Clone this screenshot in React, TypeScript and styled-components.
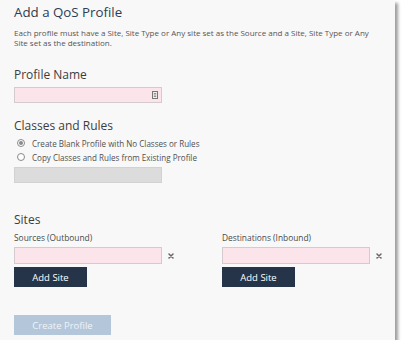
import { FC } from "react";
import styled, { createGlobalStyle, css } from "styled-components";

const GlobalStyle = createGlobalStyle`
  html, body {
    margin: 0;
    padding: 0;
    background: #ffffff;
  }
  *, *::before, *::after {
    box-sizing: border-box;
  }
  body {
    font-family: "Open Sans", "Liberation Sans", sans-serif;
    color: #4a4a4a;
  }
`;

const CardIcon: FC = () => (
  <svg width="6" height="8" viewBox="0 0 6 8">
    <rect x="0.5" y="0.5" width="5" height="7" fill="#eee" stroke="#777" />
    <line x1="1.8" y1="2.5" x2="4.2" y2="2.5" stroke="#777" strokeWidth="0.8" />
    <line x1="1.8" y1="4" x2="4.2" y2="4" stroke="#777" strokeWidth="0.8" />
    <line x1="1.8" y1="5.5" x2="4.2" y2="5.5" stroke="#777" strokeWidth="0.8" />
  </svg>
);

const RemoveIcon: FC = () => (
  <svg width="6" height="6" viewBox="0 0 6 6">
    <path d="M1 1 L5 5 M5 1 L1 5" stroke="#666" strokeWidth="1.5" strokeLinecap="round" />
  </svg>
);

interface SiteColumnProps {
  label: string;
}

const SiteColumn: FC<SiteColumnProps> = ({ label }) => (
  <Column>
    <SmallLabel>{label}</SmallLabel>
    <InputRow>
      <Field />
      <Remove>
        <RemoveIcon />
      </Remove>
    </InputRow>
    <DarkButton>Add Site</DarkButton>
  </Column>
);

const App: FC = () => {
  return (
    <>
      <GlobalStyle />
      <Panel>
        <Title>Add a QoS Profile</Title>
        <Desc>
          Each profile must have a Site, Site Type or Any site set as the Source and a Site, Site Type or Any
          Site set as the destination.
        </Desc>

        <Heading $gap={19}>Profile Name</Heading>
        <Field $gap={5}>
          <FieldIcon>
            <CardIcon />
          </FieldIcon>
        </Field>

        <Heading $gap={15}>Classes and Rules</Heading>
        <RadioList>
          <RadioRow>
            <Radio $checked />
            Create Blank Profile with No Classes or Rules
          </RadioRow>
          <RadioRow>
            <Radio />
            Copy Classes and Rules from Existing Profile
          </RadioRow>
        </RadioList>
        <DisabledSelect />

        <Heading $gap={29}>Sites</Heading>
        <Columns>
          <SiteColumn label="Sources (Outbound)" />
          <SiteColumn label="Destinations (Inbound)" />
        </Columns>

        <SubmitButton disabled>Create Profile</SubmitButton>
      </Panel>
    </>
  );
};

const Panel = styled.div`
  width: 395px;
  height: 340px;
  padding: 3px 14px 5px 14px;
  background: #f8f8f8;
  box-shadow: 3px 3px 3px rgba(0, 0, 0, 0.38);
  display: flex;
  flex-direction: column;
`;

const Title = styled.h1`
  margin: 0;
  font-size: 13.3px;
  line-height: 18px;
  font-weight: 400;
  color: #2e3d50;
`;

const Desc = styled.p`
  margin: 7.3px 0 0 0;
  font-size: 8px;
  line-height: 9.8px;
  color: #555;
`;

const Heading = styled.h2<{ $gap: number }>`
  margin: ${({ $gap }) => $gap}px 0 0 0;
  font-size: 12px;
  line-height: 15px;
  font-weight: 400;
  color: #3d3d3d;
`;

const Field = styled.div<{ $gap?: number }>`
  ${({ $gap }) => css`
    margin-top: ${$gap ?? 0}px;
  `}
  position: relative;
  width: 148px;
  height: 16px;
  background: #fbe4ea;
  border: 1px solid #d3cbcd;
`;

const FieldIcon = styled.span`
  position: absolute;
  right: 3px;
  top: 3px;
  display: flex;
`;

const RadioList = styled.div`
  margin-top: 3.5px;
  display: flex;
  flex-direction: column;
`;

const RadioRow = styled.label`
  display: flex;
  align-items: center;
  gap: 7px;
  padding-left: 3px;
  height: 14px;
  font-size: 8.05px;
  color: #505050;
`;

const Radio = styled.span<{ $checked?: boolean }>`
  width: 8px;
  height: 8px;
  border-radius: 50%;
  border: 1px solid #8a8a8a;
  background: #fff;
  display: flex;
  align-items: center;
  justify-content: center;

  &::after {
    content: "";
    width: 4px;
    height: 4px;
    border-radius: 50%;
    background: ${({ $checked }) => ($checked ? "#8a8a8a" : "transparent")};
  }
`;

const DisabledSelect = styled.div`
  margin-top: 2.7px;
  width: 148px;
  height: 16px;
  background: #dcdcdc;
  border: 1px solid #d2d2d2;
`;

const Columns = styled.div`
  display: grid;
  grid-template-columns: 208px 1fr;
`;

const Column = styled.div`
  display: flex;
  flex-direction: column;
`;

const SmallLabel = styled.div`
  margin-top: 6px;
  font-size: 8.4px;
  line-height: 10px;
  color: #4a4a4a;
`;

const InputRow = styled.div`
  margin-top: 4px;
  display: flex;
  align-items: center;
  gap: 6px;

  & > div {
    height: 17px;
  }
`;

const Remove = styled.span`
  display: flex;
`;

const DarkButton = styled.button`
  margin-top: 3px;
  width: 73px;
  height: 20px;
  border: none;
  padding: 0;
  background: #263449;
  color: #ffffff;
  font-family: "Open Sans", "Liberation Sans", sans-serif;
  font-size: 9.5px;
`;

const SubmitButton = styled.button`
  margin-top: 28px;
  width: 97px;
  height: 20px;
  border: none;
  padding: 0;
  background: #b4c7da;
  color: #eef3f8;
  font-family: "Open Sans", "Liberation Sans", sans-serif;
  font-size: 9.5px;
`;

export default App;
